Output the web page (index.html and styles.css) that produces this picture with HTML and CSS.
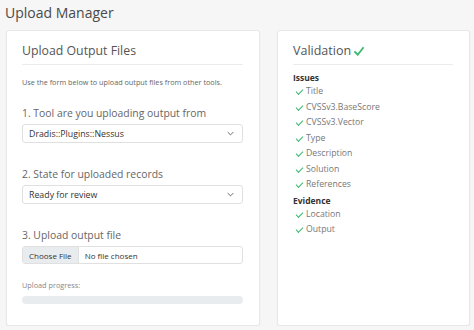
FILE: index.html
```html
<!DOCTYPE html>
<html lang="en">
<head>
    <meta charset="UTF-8">
    <meta name="viewport" content="width=device-width, initial-scale=1.0">
    <title>Upload Manager</title>
    <link rel="stylesheet" href="styles.css">
</head>
<body>
    <h1 class="page-title">Upload Manager</h1>

    <div class="layout">
        <!-- Upload form -->
        <div class="card card-upload">
            <h2 class="card-title">Upload Output Files</h2>
            <p class="intro">Use the form below to upload output files from other tools.</p>

            <div class="field">
                <label class="field-label">1. Tool are you uploading output from</label>
                <div class="select">
                    <span>Dradis::Plugins::Nessus</span>
                    <svg class="chevron" viewBox="0 0 10 6" width="7" height="5"><path d="M1 1l4 4 4-4" fill="none" stroke="#666" stroke-width="1.4"/></svg>
                </div>
            </div>

            <div class="field">
                <label class="field-label">2. State for uploaded records</label>
                <div class="select">
                    <span>Ready for review</span>
                    <svg class="chevron" viewBox="0 0 10 6" width="7" height="5"><path d="M1 1l4 4 4-4" fill="none" stroke="#666" stroke-width="1.4"/></svg>
                </div>
            </div>

            <div class="field">
                <label class="field-label">3. Upload output file</label>
                <div class="file-input">
                    <span class="file-btn">Choose File</span>
                    <span class="file-name">No file chosen</span>
                </div>
            </div>

            <p class="progress-label">Upload progress:</p>
            <div class="progress"></div>
        </div>

        <!-- Validation -->
        <div class="card card-validation">
            <h2 class="card-title">Validation
                <svg class="title-check" viewBox="0 0 14 12" width="12" height="10"><path d="M1.5 6.5l4 4 7-9" fill="none" stroke="#3bb96f" stroke-width="2.2"/></svg>
            </h2>

            <div class="group">
                <div class="group-name">Issues</div>
                <ul class="checks">
                    <li>Title</li>
                    <li>CVSSv3.BaseScore</li>
                    <li>CVSSv3.Vector</li>
                    <li>Type</li>
                    <li>Description</li>
                    <li>Solution</li>
                    <li>References</li>
                </ul>
            </div>

            <div class="group">
                <div class="group-name">Evidence</div>
                <ul class="checks">
                    <li>Location</li>
                    <li>Output</li>
                </ul>
            </div>
        </div>
    </div>
</body>
</html>
```

FILE: styles.css
```css
body {
    margin: 0;
    padding: 0 4px 0 6px;
    font-family: "Open Sans", Arial, sans-serif;
    background-color: #f6f6f6;
    color: #555;
}
.page-title {
    margin: 0 0 0 -1px;
    height: 30px;
    line-height: 26px;
    font-size: 14px;
    font-weight: 400;
    color: #4a4a4a;
}
.layout {
    display: grid;
    grid-template-columns: 254px 193px;
    gap: 17px;
}
.card {
    background-color: #ffffff;
    border: 1px solid #e8e8e8;
    border-radius: 3px;
    box-shadow: 0 1px 2px rgba(0, 0, 0, 0.05);
    box-sizing: border-box;
    height: 296px;
    padding: 11px 16px 0 15px;
}
.card-title {
    margin: 0;
    padding-bottom: 5px;
    line-height: 17px;
    font-size: 12.3px;
    font-weight: 400;
    color: #555;
    border-bottom: 1px solid #ececec;
}
.card-validation .card-title {
    font-size: 12.5px;
}
.title-check {
    vertical-align: -1px;
    margin-left: -1px;
}
.intro {
    margin: 11px 0 0;
    font-size: 7.25px;
    line-height: 12px;
    color: #666;
}
.field {
    margin-top: 18px;
}
.field + .field {
    margin-top: 24px;
}
.field-label {
    display: block;
    font-size: 10.4px;
    font-weight: 400;
    line-height: 14px;
    color: #666;
    margin-bottom: 4px;
}
.select {
    display: flex;
    align-items: center;
    justify-content: space-between;
    height: 19px;
    box-sizing: border-box;
    padding: 0 8px 0 6px;
    border: 1px solid #e0e0e0;
    border-radius: 3px;
    font-size: 8.8px;
    color: #333;
}
.file-input {
    display: flex;
    height: 18px;
    box-sizing: border-box;
    border: 1px solid #e0e0e0;
    border-radius: 3px;
    overflow: hidden;
    font-size: 8px;
    color: #333;
}
.file-btn {
    display: flex;
    align-items: center;
    padding: 0 6px;
    background-color: #e9ecef;
    border-right: 1px solid #e0e0e0;
}
.file-name {
    display: flex;
    align-items: center;
    padding: 0 6px;
}
.progress-label {
    margin: 15px 0 0;
    font-size: 7.3px;
    line-height: 12px;
    color: #888;
}
.progress {
    margin-top: 5px;
    height: 8px;
    border-radius: 4px;
    background-color: #e9ecef;
}
.group {
    margin-top: 7px;
}
.group + .group {
    margin-top: 2px;
}
.group-name {
    font-size: 8.5px;
    font-weight: 700;
    line-height: 12px;
    color: #333;
}
.checks {
    list-style: none;
    margin: 0;
    padding: 0;
}
.checks li {
    position: relative;
    padding-left: 13px;
    font-size: 8.7px;
    line-height: 15.5px;
    color: #777;
}
.checks li::before {
    content: "";
    position: absolute;
    left: 3px;
    top: 5px;
    width: 6px;
    height: 3px;
    border-left: 1.3px solid #3bb96f;
    border-bottom: 1.3px solid #3bb96f;
    transform: rotate(-45deg);
}
```
